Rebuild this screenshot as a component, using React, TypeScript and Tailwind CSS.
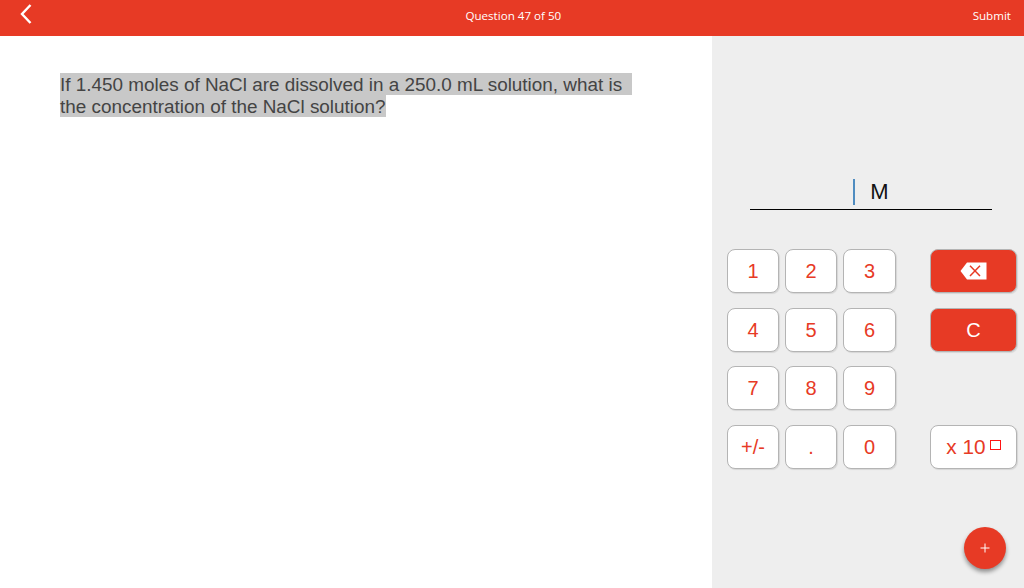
// App.tsx - Question screen with numeric answer keypad

import React from 'react';

const sans = 'font-["Liberation_Sans",Arial,sans-serif]';

const digitKeys: string[] = ['1', '2', '3', '4', '5', '6', '7', '8', '9', '+/-', '.', '0'];

const keyBase =
  'h-[44px] flex items-center justify-center rounded-[8px] border border-[#b4b4b4] text-[#e73a25] text-[20px] shadow-[1px_1px_1px_rgba(0,0,0,0.1)]';

const App: React.FC = () => {
  return (
    <div className={`w-[1024px] h-[588px] flex flex-col overflow-hidden bg-white ${sans}`}>
      {/* Top bar */}
      <header className="h-[36px] shrink-0 bg-[#e73a25] flex items-center justify-between text-white text-[11.6px] font-['Open_Sans',sans-serif] pl-[19px] pr-[13px] pb-[4px]">
        <button className="w-[14px] h-[22px] -mt-[4px]" aria-label="Back">
          <svg width="14" height="22" viewBox="0 0 14 22" fill="none">
            <path d="M11.5 2 L3 11 L11.5 20" stroke="white" strokeWidth="2.4" />
          </svg>
        </button>
        <span className="ml-[21px]">Question 47 of 50</span>
        <span>Submit</span>
      </header>

      <div className="flex flex-1">
        {/* Question */}
        <main className="w-[712px] pl-[60px] pt-[37px] text-[18.9px] leading-[22px] text-[#444444]">
          <div className="w-[572px] h-[22px] bg-[#c8c8c8] whitespace-nowrap pt-px">
            If 1.450 moles of NaCl are dissolved in a 250.0 mL solution, what is
          </div>
          <div className="w-fit h-[22px] bg-[#c8c8c8] whitespace-nowrap pt-px">
            the concentration of the NaCl solution?
          </div>
        </main>

        {/* Answer panel */}
        <aside className="flex-1 bg-[#eeeeee] flex flex-col pl-[15px] pr-[7px] pt-[143px] relative">
          <div className="ml-[23px] w-[242px] h-[31px] border-b border-black flex items-start justify-center">
            <span className="w-[2px] h-[26px] bg-[#4f8cc0] ml-[-34px] mr-[15px]" />
            <span className="text-[22px] leading-[26px] text-[#111111] -mr-[34px]">M</span>
          </div>

          <div className="mt-[39px] flex justify-between">
            <div className="grid grid-cols-[52px_52px_53px] gap-x-[6px] gap-y-[14.7px]">
              {digitKeys.map((key) => (
                <button key={key} className={`${keyBase} bg-white`}>
                  {key}
                </button>
              ))}
            </div>
            <div className="w-[87px] grid grid-rows-4 gap-y-[14.7px]">
              <button className={`${keyBase} bg-[#e73a25]`} aria-label="Backspace">
                <svg width="27" height="18" viewBox="0 0 27 18">
                  <path d="M0.5 9 L7 0.5 H26.5 V17.5 H7 Z" fill="white" />
                  <path d="M10 3.8 L20 14 M20 3.8 L10 14" stroke="#e73a25" strokeWidth="1.5" />
                </svg>
              </button>
              <button className={`${keyBase} bg-[#e73a25] text-white`}>C</button>
              <div />
              <button className={`${keyBase} bg-white`}>
                <span className="text-[20.8px]">x 10</span>
                <span className="w-[11px] h-[10px] border border-[#ff1414] ml-[4px] -mt-[4px]" />
              </button>
            </div>
          </div>

          {/* Floating add button */}
          <button className="absolute right-[18px] bottom-[19px] w-[42px] h-[42px] rounded-full bg-[#e73a25] text-white flex items-center justify-center shadow-[0_3px_4px_rgba(0,0,0,0.4)]" aria-label="Add">
            <svg width="10" height="10" viewBox="0 0 10 10">
              <path d="M5 0.5 V9.5 M0.5 5 H9.5" stroke="white" strokeWidth="1" />
            </svg>
          </button>
        </aside>
      </div>
    </div>
  );
};

export default App;
